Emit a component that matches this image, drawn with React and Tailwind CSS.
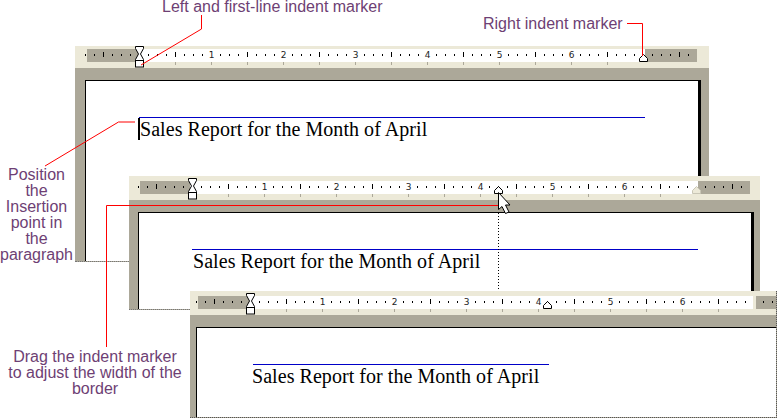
const SERIF = "font-['Liberation_Serif',serif] text-[20px] tracking-[0.05px] leading-[22px] text-black whitespace-nowrap";
const LABEL = "absolute font-['Liberation_Sans',sans-serif] text-[16px] text-[#6e3f74] text-center";

function Hourglass({ x, y }) {
  // x = left edge, y = top edge, 9 wide and 21 tall
  return (
    <g fill="#fff" stroke="#000" strokeWidth="1">
      <path d={`M${x + 0.5} ${y + 0.5}H${x + 8.5}V${y + 2.5}L${x + 5.5} ${y + 8}L${x + 8.5} ${y + 13.5}V${y + 14.5}H${x + 0.5}V${y + 13.5}L${x + 3.5} ${y + 8}L${x + 0.5} ${y + 2.5}Z`} />
      <rect x={x + 0.5} y={y + 14.5} width="8" height="6.5" />
    </g>
  );
}

function House({ x, y, stroke = "#000", fill = "#fff" }) {
  return <path d={`M${x + 0.5} ${y + 7.5}V${y + 4.5}L${x + 4.5} ${y + 0.5}L${x + 8.5} ${y + 4.5}V${y + 7.5}Z`} fill={fill} stroke={stroke} />;
}

function RulerMarks({ left, top, width, height, origin, tickY, from, to, children }) {
  const items = [];
  for (let k = from; k <= to; k++) {
    const x = Math.floor(origin + 9 * k);
    if (k === 0 || k === 56) continue;
    if (k % 8 === 0 && k > 0) {
      items.push(
        <text key={k} x={x + 0.5} y={tickY + 4} textAnchor="middle" fontSize="9" fontFamily="'DejaVu Sans',sans-serif" fill="#222">{k / 8}</text>
      );
    } else if (k % 4 === 0) {
      items.push(<rect key={k} x={x} y={tickY - 2} width="1" height="5" fill="#000" />);
    } else {
      items.push(<rect key={k} x={x} y={tickY} width="1" height="2" fill="#000" />);
    }
    if (k % 4 === 0 && k > 0 && k < 56) {
      items.push(<rect key={`g${k}`} x={x} y={tickY + 8} width="1" height="3" fill="#aca899" />);
    }
  }
  return (
    <svg className="absolute left-0 top-0" width={width} height={height} viewBox={`${left} ${top} ${width} ${height}`}>
      <g shapeRendering="crispEdges">{items}</g>
      {children}
    </svg>
  );
}

function Doc({ lineClass, textClass, caret }) {
  return (
    <div className="flex flex-col">
      <div className={`h-px bg-[#0000c8] ${lineClass}`} />
      <div className={`flex ${textClass}`}>
        {caret && <div className="w-[2px] h-[22px] bg-black" />}
        <span className={SERIF}>Sales Report for the Month of April</span>
      </div>
    </div>
  );
}

export default function App() {
  return (
    <div className="relative w-[777px] h-[418px] bg-white overflow-hidden">
      {/* Window 1 */}
      <div className="absolute left-[75px] top-[46px] w-[634px] h-[216px] flex flex-col bg-[#aca899] border-b border-dotted border-[#777]">
        <div className="h-[22px] shrink-0 bg-[#ece9d8] pt-[3px] pl-[12px] pb-[6px] flex">
          <div className="w-[51px] bg-[#aca899]" />
          <div className="w-[507px] bg-white" />
          <div className="w-[52px] bg-[#aca899]" />
        </div>
        <div className="mt-[12px] ml-[10px] mr-[8px] flex-1 bg-white border-t border-l border-r-[3px] border-black pt-[36px] pl-[53px]">
          <Doc lineClass="w-[506px]" textClass="-ml-px" caret />
        </div>
        <RulerMarks left={75} top={46} width={634} height={60} origin={139.5} tickY={54} from={-6} to={61}>
          <Hourglass x={135} y={46} />
          <House x={639} y={54} />
        </RulerMarks>
      </div>

      {/* Window 2 */}
      <div className="absolute left-[129px] top-[176px] w-[631px] h-[134px] flex flex-col bg-[#aca899] border-b border-dotted border-[#777]">
        <div className="h-[24px] shrink-0 bg-[#ece9d8] pt-[5px] pl-[11px] pb-[6px] flex">
          <div className="w-[50px] bg-[#aca899]" />
          <div className="w-[508px] bg-white" />
          <div className="w-[52px] bg-[#aca899]" />
        </div>
        <div className="mt-[12px] ml-[9px] mr-[6px] flex-1 bg-white border-t border-l border-r-[3px] border-black pt-[36px] pl-[53px]">
          <Doc lineClass="w-[506px]" textClass="pl-px" />
        </div>
        <RulerMarks left={129} top={176} width={631} height={60} origin={192.5} tickY={186} from={-6} to={61}>
          <Hourglass x={188} y={178} />
          <House x={494} y={186} />
          <House x={692} y={186} stroke="#c9c6b6" fill="#ece9d8" />
        </RulerMarks>
      </div>

      {/* Window 3 */}
      <div className="absolute left-[190px] top-[291px] w-[587px] h-[127px] flex flex-col bg-[#aca899] border-b border-r border-dotted border-[#555]">
        <div className="h-[24px] shrink-0 bg-[#ece9d8] pt-[5px] pl-[8px] pb-[6px] flex">
          <div className="w-[52px] bg-[#aca899]" />
          <div className="w-[503px] bg-white" />
          <div className="w-[3px]" />
          <div className="flex-1 bg-[#aca899]" />
        </div>
        <div className="mt-[12px] ml-[6px] flex-1 bg-white border-t border-l border-black pt-[36px] pl-[56px]">
          <Doc lineClass="w-[296px]" textClass="-ml-px" />
        </div>
        <RulerMarks left={190} top={291} width={587} height={60} origin={250.5} tickY={301} from={-6} to={58}>
          <Hourglass x={246} y={293} />
          <House x={543} y={301} />
        </RulerMarks>
      </div>

      {/* Callout lines and pointer */}
      <svg className="absolute left-0 top-0" width="777" height="418" viewBox="0 0 777 418">
        <g fill="none" stroke="#f00" strokeWidth="1">
          <path d="M201.5 15V29L141 65" />
          <path d="M135 122H118.5L45 166" />
          <path d="M627 23.5H642.5V56" />
          <path d="M503 205.5H106.5V347" />
        </g>
        <path d="M498.5 213V291" stroke="#000" strokeDasharray="1 2" fill="none" />
        <path d="M498.5 192.5V209.5L502 206.5L505.5 213.5L509 212L505.5 205H510Z" fill="#fff" stroke="#000" />
      </svg>

      {/* Labels */}
      <div className={`${LABEL} leading-[14px] left-[162px] top-0 whitespace-nowrap`}>Left and first-line indent marker</div>
      <div className={`${LABEL} leading-[16px] left-[483px] top-[16px] whitespace-nowrap`}>Right indent marker</div>
      <div className={`${LABEL} leading-[16px] left-0 top-[167px] w-[73px]`}>Position the Insertion point in the paragraph</div>
      <div className={`${LABEL} leading-[16px] left-[6px] top-[349px] w-[178px]`}>Drag the indent marker to adjust the width of the border</div>
    </div>
  );
}
